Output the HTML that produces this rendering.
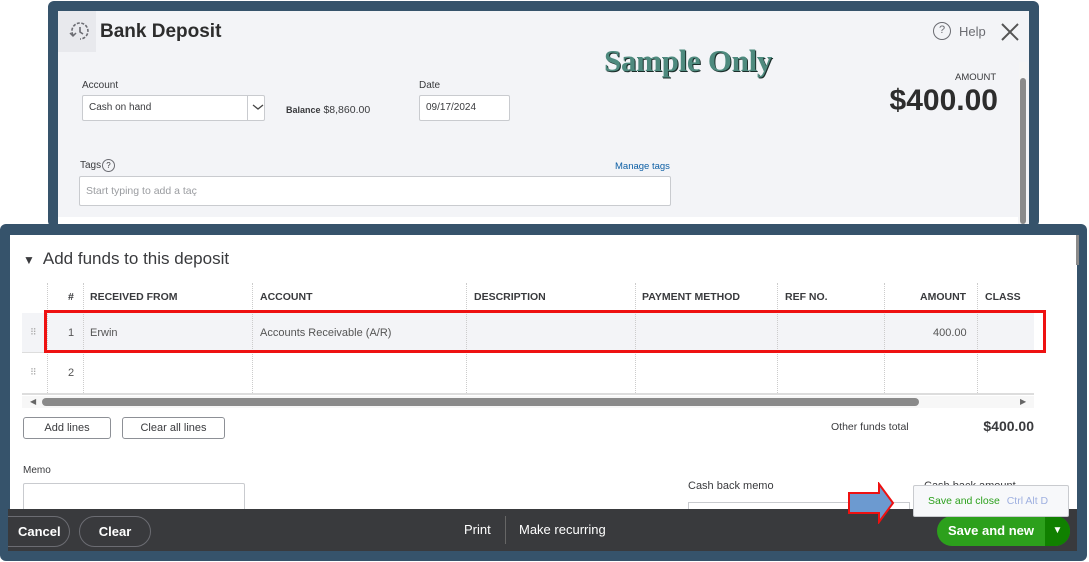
<!DOCTYPE html>
<html><head><style>
*{box-sizing:border-box;margin:0;padding:0}
body{width:1089px;height:562px;background:#fff;position:relative;overflow:hidden;font-family:"Liberation Sans",sans-serif;color:#393a3d}
.abs{position:absolute}
.lbl{font-size:10px;color:#393a3d}
.inp{position:absolute;background:#fff;border:1px solid #c9cbcf;border-radius:2px;font-size:10px;color:#393a3d;padding-left:6px;line-height:24px}
.col{position:absolute;top:283px;height:110px;border-left:1px dotted #ccc}
.hd{position:absolute;top:291px;font-size:10.5px;font-weight:bold;color:#393a3d}
.btn{position:absolute;border:1px solid #8d9096;border-radius:3px;font-size:11px;text-align:center;background:#fff}
</style></head><body>
<div class="abs" style="left:48px;top:1px;width:991px;height:226px;background:#36536b;border-radius:6px"></div>
<div class="abs" style="left:58px;top:11px;width:971px;height:214px;background:#f3f4f7"></div>
<div class="abs" style="left:58px;top:11px;width:38px;height:41px;background:#e8e9ed"></div>
<svg class="abs" style="left:68px;top:20px" width="24" height="22" viewBox="0 0 24 22"><path d="M5 15A8 8 0 1 1 12 19" fill="none" stroke="#6b6c72" stroke-width="1.6" stroke-dasharray="3 1.5"/><path d="M12 7v5l3 2" fill="none" stroke="#6b6c72" stroke-width="1.6"/><path d="M2 13l3 3 3-3" fill="none" stroke="#6b6c72" stroke-width="1.5"/></svg>
<div class="abs" style="left:100px;top:21px;font-size:19px;font-weight:bold;color:#2d2d2d">Bank Deposit</div>
<div class="abs" style="left:933px;top:22px;width:18px;height:18px;border:1.5px solid #6b6c72;border-radius:50%;font-size:11px;text-align:center;line-height:15px;color:#6b6c72">?</div>
<div class="abs" style="left:959px;top:24px;font-size:13px;color:#6b6c72">Help</div>
<svg class="abs" style="left:1000px;top:22px" width="20" height="20"><path d="M2 2L18 18M18 2L2 18" stroke="#555" stroke-width="2"/></svg>
<div class="abs" style="left:604px;top:43px;font-family:'Liberation Serif',serif;font-weight:bold;font-size:31px;color:#4e8a7e;text-shadow:1px 1px 0 #1b2d2a;letter-spacing:-0.3px">Sample Only</div>
<div class="abs" style="left:955px;top:72px;font-size:9.5px;color:#393a3d">AMOUNT</div>
<div class="abs" style="right:91px;top:84px;font-size:30px;font-weight:bold;color:#2d2d2d">$400.00</div>
<div class="abs" style="left:1019px;top:62px;width:8px;height:162px;background:#f5f5f5"></div>
<div class="abs" style="left:1020px;top:78px;width:6px;height:146px;background:#8a8a8a;border-radius:3px"></div>
<div class="abs lbl" style="left:82px;top:80px">Account</div>
<div class="inp" style="left:82px;top:95px;width:183px;height:26px">Cash on hand</div>
<div class="abs" style="left:247px;top:96px;width:1px;height:24px;background:#c9cbcf"></div>
<svg class="abs" style="left:252px;top:102px" width="12" height="10"><path d="M1 3l5 4 5-4" fill="none" stroke="#444" stroke-width="1.3"/></svg>
<div class="abs" style="left:286px;top:104px;font-size:10.5px"><span style="font-size:9px;font-weight:bold">Balance</span> $8,860.00</div>
<div class="abs lbl" style="left:419px;top:80px">Date</div>
<div class="inp" style="left:419px;top:95px;width:91px;height:26px">09/17/2024</div>
<div class="abs lbl" style="left:80px;top:160px">Tags</div>
<div class="abs" style="left:102px;top:159px;width:13px;height:13px;border:1px solid #6b6c72;border-radius:50%;font-size:8px;text-align:center;line-height:11px">?</div>
<div class="abs" style="left:615px;top:161px;font-size:9.5px;color:#0d5fa5">Manage tags</div>
<div class="inp" style="left:79px;top:176px;width:592px;height:30px;line-height:28px;color:#9a9ca0;font-size:10.5px">Start typing to add a taç</div>
<div class="abs" style="left:58px;top:217px;width:960px;height:8px;background:#fff"></div>

<div class="abs" style="left:0;top:224px;width:1087px;height:337px;background:#36536b;border-radius:6px"></div>
<div class="abs" style="left:10px;top:235px;width:1067px;height:275px;background:#fff"></div>
<div class="abs" style="left:1076px;top:235px;width:3px;height:30px;background:#8a8a8a"></div>
<div class="abs" style="left:23px;top:249px;font-size:17px;color:#393a3d"><span style="font-size:12px;margin-right:8px">▼</span>Add funds to this deposit</div>
<div class="abs" style="left:22px;top:313px;width:1012px;height:40px;background:#f3f4f7"></div>
<div class="abs" style="left:22px;top:352px;width:1012px;height:1px;background:#ddd"></div>
<div class="abs" style="left:22px;top:393px;width:1012px;height:2px;background:#ddd"></div>
<div class="col" style="left:47px"></div><div class="col" style="left:83px"></div><div class="col" style="left:252px"></div><div class="col" style="left:466px"></div><div class="col" style="left:635px"></div><div class="col" style="left:777px"></div><div class="col" style="left:884px"></div><div class="col" style="left:977px"></div>
<div class="hd" style="left:68px">#</div>
<div class="hd" style="left:90px">RECEIVED FROM</div>
<div class="hd" style="left:260px">ACCOUNT</div>
<div class="hd" style="left:474px">DESCRIPTION</div>
<div class="hd" style="left:642px">PAYMENT METHOD</div>
<div class="hd" style="left:785px">REF NO.</div>
<div class="hd" style="left:920px">AMOUNT</div>
<div class="hd" style="left:985px">CLASS</div>
<div class="abs" style="left:30px;top:327px;font-size:9px;color:#aaa;letter-spacing:-1px">⠿</div>
<div class="abs" style="left:30px;top:367px;font-size:9px;color:#aaa;letter-spacing:-1px">⠿</div>
<div class="abs" style="left:68px;top:327px;font-size:11px;color:#555">1</div>
<div class="abs" style="left:68px;top:367px;font-size:11px;color:#555">2</div>
<div class="abs" style="left:90px;top:327px;font-size:11px;color:#555">Erwin</div>
<div class="abs" style="left:260px;top:327px;font-size:11px;color:#555">Accounts Receivable (A/R)</div>
<div class="abs" style="left:933px;top:327px;font-size:11px;color:#555">400.00</div>
<div class="abs" style="left:44px;top:310px;width:1002px;height:43px;border:3px solid #ee1111"></div>
<div class="abs" style="left:22px;top:396px;width:1012px;height:12px;background:#f7f7f7"></div>
<div class="abs" style="left:30px;top:397px;font-size:8px;color:#666">◀</div>
<div class="abs" style="left:42px;top:398px;width:877px;height:8px;background:#8a8a8a;border-radius:4px"></div>
<div class="abs" style="left:1020px;top:397px;font-size:8px;color:#666">▶</div>
<div class="btn" style="left:23px;top:417px;width:88px;height:22px;line-height:20px">Add lines</div>
<div class="btn" style="left:122px;top:417px;width:103px;height:22px;line-height:20px">Clear all lines</div>
<div class="abs" style="left:831px;top:421px;font-size:10.5px">Other funds total</div>
<div class="abs" style="right:55px;top:418px;font-size:14px;font-weight:bold">$400.00</div>
<div class="abs lbl" style="left:23px;top:465px">Memo</div>
<div class="abs" style="left:23px;top:483px;width:222px;height:30px;border:1px solid #c9cbcf;border-radius:2px"></div>
<div class="abs" style="left:688px;top:480px;font-size:11px">Cash back memo</div>
<div class="abs" style="left:688px;top:502px;width:222px;height:10px;border:1px solid #c9cbcf"></div>
<div class="abs" style="left:924px;top:480px;font-size:11px">Cash back amount</div>
<div class="abs" style="left:8px;top:509px;width:1069px;height:42px;background:#393a3d"></div>
<div class="abs" style="left:8px;top:516px;width:62px;height:31px;border:1px solid #6b6c72;border-left:none;border-radius:0 16px 16px 0;color:#fff;font-size:13px;font-weight:bold;line-height:29px;padding-left:10px">Cancel</div>
<div class="abs" style="left:79px;top:516px;width:72px;height:31px;border:1px solid #6b6c72;border-radius:16px;color:#fff;font-size:13px;font-weight:bold;line-height:29px;text-align:center">Clear</div>
<div class="abs" style="left:464px;top:522px;color:#fff;font-size:13px">Print</div>
<div class="abs" style="left:505px;top:516px;width:1px;height:28px;background:#666"></div>
<div class="abs" style="left:519px;top:522px;color:#fff;font-size:13px">Make recurring</div>
<div class="abs" style="left:937px;top:516px;width:133px;height:30px;background:#2ca01c;border-radius:15px;overflow:hidden">
<div style="position:absolute;left:0;top:0;width:108px;height:30px;color:#fff;font-weight:bold;font-size:13px;text-align:center;line-height:30px">Save and new</div>
<div style="position:absolute;left:108px;top:0;width:25px;height:30px;background:#108000;color:#fff;font-size:10px;text-align:center;line-height:30px">▼</div></div>
<div class="abs" style="left:913px;top:485px;width:156px;height:32px;background:#f7f8fa;border:1px solid #c9cbcf;border-radius:2px;font-size:10.5px;line-height:30px;padding-left:14px;color:#2ca01c">Save and close <span style="color:#9fb0e0;margin-left:4px">Ctrl Alt D</span></div>
<svg class="abs" style="left:847px;top:482px" width="48" height="42"><path d="M2 11H32V2L46 21L32 40V31H2Z" fill="#6c9ad0" stroke="#ee1111" stroke-width="2"/></svg>
</body></html>
